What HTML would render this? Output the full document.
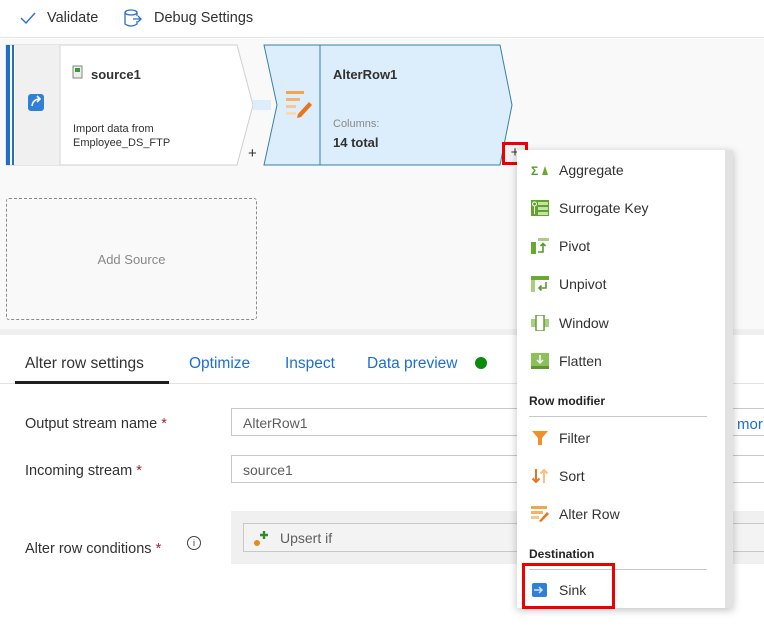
<!DOCTYPE html>
<html><head><meta charset="utf-8"><style>
*{margin:0;padding:0;box-sizing:border-box}
body{width:764px;height:643px;overflow:hidden;background:#fff;font-family:"Segoe UI","Liberation Sans",sans-serif;color:#323130;position:relative}
.a{position:absolute}
.t{font-size:14px;white-space:nowrap}
.mi{position:absolute;left:531px;font-size:14px;color:#323130;white-space:nowrap;line-height:18px}
.ic{display:inline-block;width:18px;height:16px;vertical-align:-3px;margin-right:10px}
.hd{position:absolute;left:529px;font-size:12px;font-weight:bold;color:#252423}
</style></head><body>
<div class="a" style="left:0;top:0;width:764px;height:38px;background:#fff;border-bottom:1px solid #e6e6e6"></div>
<svg class="a" style="left:20px;top:11px" width="16" height="14"><path d="M1 7 L6 12 L15 2" stroke="#2a6ed1" stroke-width="1.4" fill="none"/></svg>
<div class="a t" style="left:47px;top:10px;font-size:14.5px">Validate</div>
<svg class="a" style="left:123px;top:9px" width="20" height="20"><ellipse cx="8" cy="3.5" rx="6" ry="2.5" stroke="#2a6ed1" stroke-width="1.3" fill="none"/><path d="M2 3.5 V15 Q8 19 14 15 V12 M14 3.5 V7" stroke="#2a6ed1" stroke-width="1.3" fill="none"/><path d="M10 10 H18 M15 7 L18 10 L15 13" stroke="#2a6ed1" stroke-width="1.3" fill="none"/></svg>
<div class="a t" style="left:154px;top:10px;font-size:14.5px">Debug Settings</div>
<div class="a" style="left:0;top:39px;width:764px;height:290px;background:#f9f9f9"></div>
<div class="a" style="left:0;top:329px;width:764px;height:6px;background:#efefef"></div>
<svg class="a" style="left:5px;top:44px" width="520" height="124">
<polygon points="1,1 232,1 248,61 232,121 1,121" fill="#fff" stroke="#cfcfcf"/>
<rect x="1" y="1" width="4" height="120" fill="#1f6fc5"/>
<rect x="7" y="1" width="2" height="120" fill="#1f6fc5"/>
<rect x="10" y="1" width="45" height="120" fill="#f0f0f0"/>
<line x1="55" y1="1" x2="55" y2="121" stroke="#d6d6d6"/>
<rect x="248" y="56" width="18" height="10" fill="#dcedfb"/>
<polygon points="259,1 495,1 507,61 495,121 259,121 272,61" fill="#dcedfb" stroke="#3a7fa6"/>
<line x1="315" y1="1" x2="315" y2="121" stroke="#3a7fa6"/>
<rect x="23" y="50" width="16" height="17" rx="3" fill="#2f80d6"/>
<path d="M27 62 Q28 55 35 55 M32 52 L35 55 L32 58" stroke="#fff" stroke-width="1.6" fill="none"/>
<rect x="68" y="22" width="9" height="12" fill="#eee" stroke="#666" stroke-width="0.8"/>
<rect x="70" y="24" width="5" height="4" fill="#3a9a3a"/>
<rect x="281" y="47" width="18" height="3" fill="#f2a54a"/>
<rect x="281" y="54" width="14" height="3" fill="#f2b46a"/>
<rect x="281" y="61" width="10" height="3" fill="#f5c890"/>
<rect x="281" y="68" width="10" height="3" fill="#f8dab4"/>
<path d="M293 70 L304 58 L307 61 L296 73 L292 74 Z" fill="#e8751a"/>
</svg>
<div class="a t" style="left:91px;top:67px;font-weight:bold;font-size:13px">source1</div>
<div class="a" style="left:73px;top:122px;font-size:11px;line-height:14px">Import data from<br>Employee_DS_FTP</div>
<div class="a" style="left:248px;top:145px;font-size:15px">+</div>
<div class="a t" style="left:333px;top:67px;font-weight:bold;font-size:13px">AlterRow1</div>
<div class="a" style="left:333px;top:118px;font-size:11px;color:#8a8886">Columns:</div>
<div class="a" style="left:333px;top:135px;font-size:13px;font-weight:bold">14 total</div>
<div class="a" style="left:502px;top:142px;width:26px;height:23px;border:3px solid #e00;background:#f3f3f3;font-size:15px;text-align:center;line-height:15px">+</div>
<div class="a" style="left:6px;top:198px;width:251px;height:122px;border:1.3px dashed #8a8a8a;border-radius:3px;font-size:13px;color:#8a8886;text-align:center;line-height:122px">Add Source</div>
<div class="a t" style="left:25px;top:355px;font-size:15.5px">Alter row settings</div>
<div class="a t" style="left:189px;top:355px;font-size:15.5px;color:#1b6ed4">Optimize</div>
<div class="a t" style="left:285px;top:355px;font-size:15.5px;color:#1b6ed4">Inspect</div>
<div class="a t" style="left:367px;top:355px;font-size:15.5px;color:#1b6ed4">Data preview</div>
<div class="a" style="left:475px;top:357px;width:12px;height:12px;border-radius:50%;background:#0c8a0c"></div>
<div class="a" style="left:0;top:383px;width:764px;height:1px;background:#e3e3e3"></div>
<div class="a" style="left:15px;top:381px;width:154px;height:3px;background:#201f1e"></div>
<div class="a t" style="left:25px;top:416px;font-size:14.5px">Output stream name <span style="color:#a4262c">*</span></div>
<div class="a" style="left:231px;top:408px;width:540px;height:28px;border:1px solid #c8c8c8;font-size:14px;color:#605e5c;padding:6px 11px 0">AlterRow1</div>
<div class="a t" style="left:737px;top:416px;font-size:15px;color:#1b6ed4">mor</div>
<div class="a t" style="left:25px;top:463px;font-size:14.5px">Incoming stream <span style="color:#a4262c">*</span></div>
<div class="a" style="left:231px;top:455px;width:540px;height:28px;border:1px solid #c8c8c8;font-size:14px;color:#605e5c;padding:6px 11px 0">source1</div>
<div class="a" style="left:231px;top:511px;width:540px;height:53px;background:#f0f0f0"></div>
<div class="a" style="left:243px;top:523px;width:530px;height:29px;border:1px solid #c8c8c8;background:#f3f3f3;font-size:14px;color:#605e5c;padding:6px 36px 0">Upsert if</div>
<svg class="a" style="left:252px;top:530px" width="20" height="18"><circle cx="5" cy="13" r="3" fill="#e8891a"/><path d="M12 1 V9 M8 5 H16" stroke="#2e8b2e" stroke-width="2.4"/></svg>
<div class="a t" style="left:25px;top:541px;font-size:14.5px">Alter row conditions <span style="color:#a4262c">*</span></div>
<div class="a" style="left:187px;top:536px;width:14px;height:14px;border:1px solid #444;border-radius:50%;font-size:9px;text-align:center;line-height:12px">i</div>
<div class="a" style="left:517px;top:150px;width:216px;height:458px;background:#fff;box-shadow:0 2px 8px rgba(0,0,0,.25)"></div>
<div class="a" style="left:725px;top:150px;width:8px;height:458px;background:#e2e2e2"></div>
<div class="mi" style="top:161px"><svg class="ic" viewBox="0 0 18 16"><text x="0" y="13" font-size="12" fill="#5a9a2a" font-family="Liberation Sans" font-weight="bold">Σ</text><path d="M11 13 L14 4 L17 13 Z" fill="#6aaa2e"/></svg>Aggregate</div>
<div class="mi" style="top:199px"><svg class="ic" viewBox="0 0 18 16"><rect x="0" y="0" width="18" height="16" fill="#5fa52a"/><rect x="7" y="2" width="10" height="3" fill="#c6e3a6"/><rect x="7" y="7" width="10" height="3" fill="#c6e3a6"/><rect x="7" y="12" width="10" height="3" fill="#c6e3a6"/><circle cx="3.5" cy="4" r="2" fill="none" stroke="#fff"/><path d="M3.5 6 V14" stroke="#fff"/></svg>Surrogate Key</div>
<div class="mi" style="top:237px"><svg class="ic" viewBox="0 0 18 16"><rect x="0" y="4" width="5" height="12" fill="#6aaa2e"/><rect x="7" y="0" width="11" height="3" fill="#a8d080"/><path d="M7 14 H12 V6 M9.5 8 L12 5.5 L14.5 8" stroke="#5a9a2a" stroke-width="1.6" fill="none"/></svg>Pivot</div>
<div class="mi" style="top:275px"><svg class="ic" viewBox="0 0 18 16"><rect x="0" y="0" width="18" height="4" fill="#6aaa2e"/><rect x="0" y="4" width="4" height="12" fill="#a8d080"/><path d="M15 6 V12 H8 M10.5 9.5 L8 12 L10.5 14.5" stroke="#5a9a2a" stroke-width="1.6" fill="none"/></svg>Unpivot</div>
<div class="mi" style="top:314px"><svg class="ic" viewBox="0 0 18 16"><rect x="0" y="4" width="18" height="8" fill="#a8d080"/><rect x="5" y="0" width="8" height="16" fill="#fff" stroke="#5a9a2a" stroke-width="1.4"/></svg>Window</div>
<div class="mi" style="top:352px"><svg class="ic" viewBox="0 0 18 16"><rect x="0" y="0" width="18" height="13" fill="#8cc05a"/><rect x="0" y="13" width="18" height="3" fill="#5a9a2a"/><path d="M9 2 V10 M6 7 L9 10 L12 7" stroke="#fff" stroke-width="1.5" fill="none"/></svg>Flatten</div>
<div class="hd" style="top:394px">Row modifier</div>
<div class="a" style="left:529px;top:416px;width:178px;height:1px;background:#c8c8c8"></div>
<div class="mi" style="top:429px"><svg class="ic" viewBox="0 0 18 16"><path d="M1 1 H17 L11 8 V15 H7 V8 Z" fill="#f0902a"/></svg>Filter</div>
<div class="mi" style="top:467px"><svg class="ic" viewBox="0 0 18 16"><path d="M5 1 V14 M1.5 10.5 L5 14 L8.5 10.5" stroke="#e8751a" stroke-width="2" fill="none"/><path d="M13 15 V2 M9.5 5.5 L13 2 L16.5 5.5" stroke="#f8c080" stroke-width="2" fill="none"/></svg>Sort</div>
<div class="mi" style="top:505px"><svg class="ic" viewBox="0 0 18 16"><rect x="0" y="0" width="16" height="3" fill="#f2a54a"/><rect x="0" y="5" width="12" height="3" fill="#f2b46a"/><rect x="0" y="10" width="8" height="3" fill="#f5c890"/><path d="M8 15 L16 6 L18 8 L10 16 Z" fill="#e8751a"/></svg>Alter Row</div>
<div class="hd" style="top:547px">Destination</div>
<div class="a" style="left:529px;top:569px;width:178px;height:1px;background:#c8c8c8"></div>
<div class="mi" style="top:581px"><svg class="ic" viewBox="0 0 18 16"><rect x="1" y="1" width="15" height="14" rx="2" fill="#2f80d6"/><path d="M3 8 H11 M8 5 L11 8 L8 11" stroke="#cfe4fb" stroke-width="1.5" fill="none"/></svg>Sink</div>
<div class="a" style="left:522px;top:563px;width:93px;height:46px;border:3px solid #e00"></div>
</body></html>
